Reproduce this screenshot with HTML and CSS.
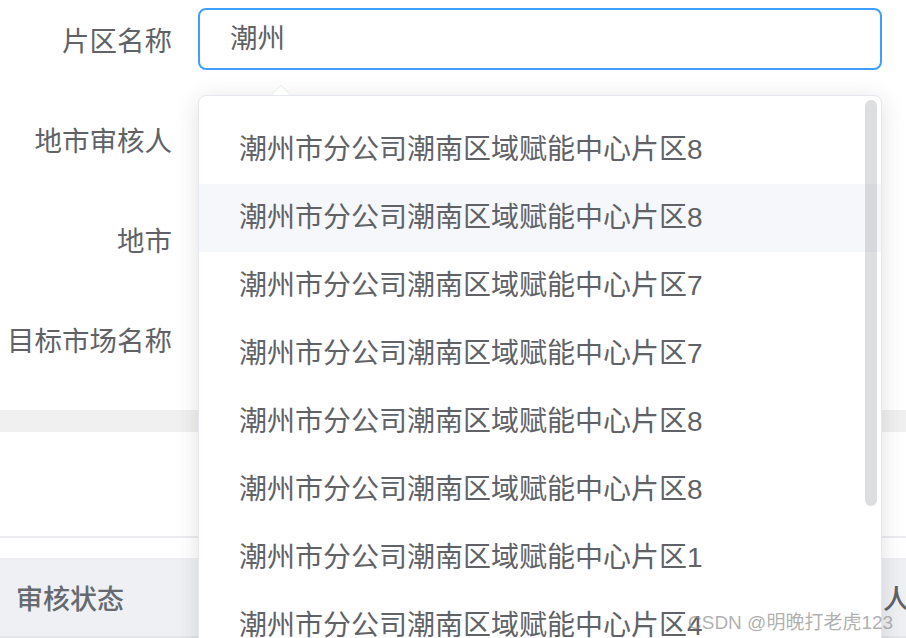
FILE: index.html
```html
<!DOCTYPE html>
<html lang="zh">
<head>
<meta charset="utf-8">
<link rel="stylesheet" href="styles.css">
</head>
<body>
<div class="page">
  <form class="form">
    <div class="row">
      <label class="label">片区名称</label>
      <div class="field">
        <div class="input focus">潮州</div>
        <div class="dropdown">
          <div class="arrow"></div>
          <ul class="list">
            <li class="item">潮州市分公司潮南区域赋能中心片区8</li>
            <li class="item hover">潮州市分公司潮南区域赋能中心片区8</li>
            <li class="item">潮州市分公司潮南区域赋能中心片区7</li>
            <li class="item">潮州市分公司潮南区域赋能中心片区7</li>
            <li class="item">潮州市分公司潮南区域赋能中心片区8</li>
            <li class="item">潮州市分公司潮南区域赋能中心片区8</li>
            <li class="item">潮州市分公司潮南区域赋能中心片区1</li>
            <li class="item">潮州市分公司潮南区域赋能中心片区4</li>
          </ul>
          <div class="scrollbar"></div>
        </div>
      </div>
    </div>
    <div class="row">
      <label class="label">地市审核人</label>
      <div class="field"><div class="input"></div></div>
    </div>
    <div class="row">
      <label class="label">地市</label>
      <div class="field"><div class="input"></div></div>
    </div>
    <div class="row">
      <label class="label">目标市场名称</label>
      <div class="field"><div class="input"></div></div>
    </div>
  </form>
  <div class="band"></div>
  <div class="panel"></div>
  <div class="table-head">
    <span class="th">审核状态</span>
    <span class="th th-right">人</span>
  </div>
</div>
<div class="watermark">CSDN @明晚打老虎123</div>
</body>
</html>
```
FILE: styles.css
```css
html, body {
  margin: 0;
  padding: 0;
  width: 906px;
  height: 638px;
  overflow: hidden;
  background: #ffffff;
}
body {
  font-family: "Liberation Sans", "Noto Sans CJK SC", sans-serif;
  color: #606266;
  position: relative;
}
.page {
  display: flex;
  flex-direction: column;
}
.form {
  display: flex;
  flex-direction: column;
  gap: 38px;
  padding-top: 8px;
  height: 410px;
  box-sizing: border-box;
  margin: 0;
}
.row {
  display: flex;
  align-items: center;
  height: 62px;
}
.label {
  width: 198px;
  padding-right: 26px;
  box-sizing: border-box;
  text-align: right;
  font-size: 27.5px;
  color: #606266;
  white-space: nowrap;
}
.field {
  position: relative;
  width: 684px;
  height: 62px;
}
.input {
  height: 62px;
  box-sizing: border-box;
  border: 2px solid #dcdfe6;
  border-radius: 8px;
  padding-left: 30px;
  font-size: 27.5px;
  line-height: 58px;
  color: #606266;
}
.input.focus {
  border-color: #409eff;
}
.dropdown {
  position: absolute;
  left: 0;
  top: 87px;
  width: 682px;
  height: 640px;
  background: #ffffff;
  border: 1px solid #e4e7ed;
  border-radius: 8px;
  box-shadow: 0 4px 24px rgba(0, 0, 0, 0.12);
  z-index: 10;
}
.arrow {
  position: absolute;
  left: 72px;
  top: -11px;
  width: 0;
  height: 0;
  border-left: 10px solid transparent;
  border-right: 10px solid transparent;
  border-bottom: 10px solid #e4e7ed;
}
.arrow::after {
  content: "";
  position: absolute;
  left: -9px;
  top: 1px;
  border-left: 9px solid transparent;
  border-right: 9px solid transparent;
  border-bottom: 9px solid #ffffff;
}
.list {
  list-style: none;
  margin: 0;
  padding: 20px 0 0;
}
.item {
  height: 68px;
  line-height: 68px;
  padding-left: 40px;
  font-size: 28px;
  color: #606266;
  white-space: nowrap;
}
.item.hover {
  background: #f5f7fa;
}
.scrollbar {
  position: absolute;
  right: 4px;
  top: 4px;
  width: 12px;
  height: 406px;
  border-radius: 6px;
  background: rgba(144, 147, 153, 0.3);
}
.band {
  height: 22px;
  background: #f0f0f1;
}
.panel {
  height: 104px;
  border-bottom: 2px solid #ebedf0;
}
.table-head {
  margin-top: 20px;
  height: 80px;
  background: #eef0f4;
  display: flex;
  align-items: center;
  justify-content: space-between;
  border-bottom: 2px solid #e4e6ea;
  box-sizing: border-box;
}
.th {
  font-size: 27px;
  font-weight: 500;
  color: #666a70;
  padding-left: 16px;
}
.th-right {
  padding-left: 0;
  margin-right: -4px;
  color: #606266;
}
.watermark {
  position: absolute;
  left: 688px;
  top: 607px;
  font-size: 19px;
  color: rgba(150, 150, 150, 0.75);
  white-space: nowrap;
  z-index: 20;
  font-family: "Liberation Sans", "Noto Sans CJK SC", sans-serif;
}
```
